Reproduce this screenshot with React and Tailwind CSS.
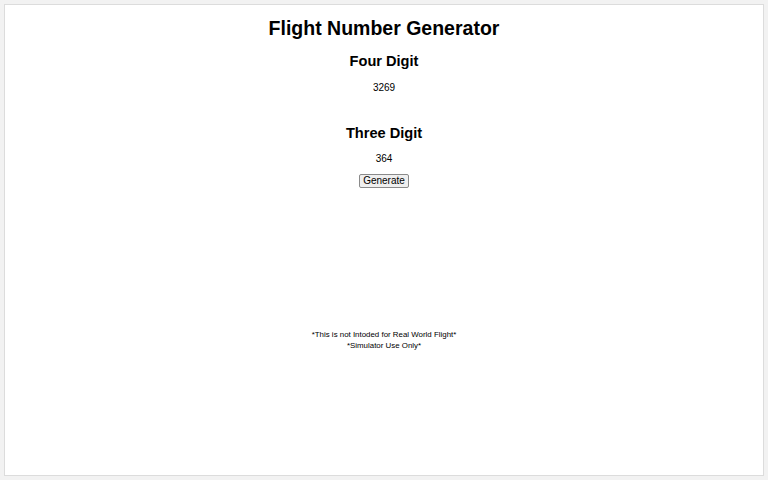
export default function App() {
  return (
    <div className="w-[768px] h-[480px] bg-[#f2f2f2] p-[4px]" style={{ fontFamily: '"Liberation Sans", Arial, sans-serif' }}>
      <div className="h-full bg-white border border-[#dcdcdc] flex flex-col items-center text-black">
        <h1 className="mt-[11px] text-[19.5px] leading-[24px] font-bold">Flight Number Generator</h1>
        <h2 className="mt-[12px] text-[14.6px] leading-[18px] font-bold">Four Digit</h2>
        <p className="mt-[12px] text-[10px] leading-[12px]">3269</p>
        <h2 className="mt-[30px] text-[14.6px] leading-[18px] font-bold">Three Digit</h2>
        <p className="mt-[11px] text-[10px] leading-[12px]">364</p>
        <button className="mt-[9px] h-[14px] px-[3px] text-[10px] leading-[12px] bg-[#efefef] border border-[#8a8a8a] rounded-[2px]">Generate</button>
        <p className="mt-[141px] text-[7.9px] leading-[11px] text-center">*This is not Intoded for Real World Flight*<br />*Simulator Use Only*</p>
      </div>
    </div>
  );
}
